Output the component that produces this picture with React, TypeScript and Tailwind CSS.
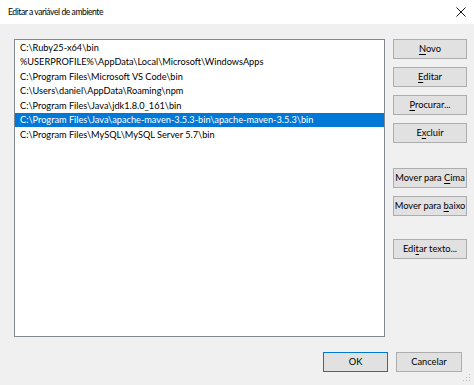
import React from "react";

const font = { fontFamily: 'Lato, "Noto Sans", "Liberation Sans", sans-serif' };

const rows = [
  "C:\\Ruby25-x64\\bin",
  "%USERPROFILE%\\AppData\\Local\\Microsoft\\WindowsApps",
  "C:\\Program Files\\Microsoft VS Code\\bin",
  "C:\\Users\\daniel\\AppData\\Roaming\\npm",
  "C:\\Program Files\\Java\\jdk1.8.0_161\\bin",
  "C:\\Program Files\\Java\\apache-maven-3.5.3-bin\\apache-maven-3.5.3\\bin",
  "C:\\Program Files\\MySQL\\MySQL Server 5.7\\bin",
];

function Btn({
  pre,
  u,
  post,
  cls = "",
  def = false,
}: {
  pre: string;
  u?: string;
  post?: string;
  cls?: string;
  def?: boolean;
}) {
  return (
    <div
      className={
        "flex h-[20px] items-center justify-center bg-[#e1e1e1] text-[9.3px] leading-none text-black " +
        (def ? "border border-[#0078d7] " : "border border-[#adadad] ") +
        cls
      }
    >
      <span className="whitespace-nowrap">
        {pre}
        {u ? <span className="underline underline-offset-[2px]">{u}</span> : null}
        {post}
      </span>
    </div>
  );
}

export default function App() {
  return (
    <div
      className="relative flex h-[385px] w-[474px] flex-col overflow-hidden bg-[#f0f0f0]"
      style={font}
    >
      <div className="flex h-[24px] items-center justify-between bg-white pl-[8px] pr-[7px]">
        <span className="text-[8.6px] tracking-[-0.45px] text-black">Editar a variável de ambiente</span>
        <svg width="10" height="10" viewBox="0 0 10 10" className="mr-[1px]">
          <path d="M0.5 0.5 L9.5 9.5 M9.5 0.5 L0.5 9.5" stroke="#111" strokeWidth="1" />
        </svg>
      </div>
      <div className="flex pl-[14px] pt-[15px]">
        <div className="h-[298px] w-[371px] border border-[#828790] bg-white">
          {rows.map((r, i) => (
            <div
              key={i}
              className={
                "flex h-[14.5px] items-center whitespace-nowrap pl-[5px] text-[9.2px] leading-none " +
                (i === 5 ? "bg-[#0078d7] text-white" : "text-black")
              }
            >
              {r}
            </div>
          ))}
        </div>
        <div className="ml-[8px] flex w-[74px] flex-col">
          <Btn pre="" u="N" post="ovo" />
          <Btn pre="" u="E" post="ditar" cls="mt-[8px]" />
          <Btn pre="" u="P" post="rocurar..." cls="mt-[8px]" />
          <Btn pre="E" u="x" post="cluir" cls="mt-[8px]" />
          <Btn pre="Mover para " u="C" post="ima" cls="mt-[25px]" />
          <Btn pre="Mover para " u="b" post="aixo" cls="mt-[8px]" />
          <Btn pre="Edi" u="t" post="ar texto..." cls="mt-[23px]" />
        </div>
      </div>
      <div className="flex justify-end gap-[8px] pr-[12px] pt-[15px]">
        <Btn pre="OK" def cls="w-[65px]" />
        <Btn pre="Cancelar" cls="w-[66px]" />
      </div>
      <svg className="absolute bottom-[3px] right-[3px]" width="9" height="9" viewBox="0 0 9 9">
        <rect x="7" y="1" width="1" height="1" fill="#b8b8b8" />
        <rect x="4" y="4" width="1" height="1" fill="#b8b8b8" />
        <rect x="7" y="4" width="1" height="1" fill="#b8b8b8" />
        <rect x="1" y="7" width="1" height="1" fill="#b8b8b8" />
        <rect x="4" y="7" width="1" height="1" fill="#b8b8b8" />
        <rect x="7" y="7" width="1" height="1" fill="#b8b8b8" />
      </svg>
    </div>
  );
}
